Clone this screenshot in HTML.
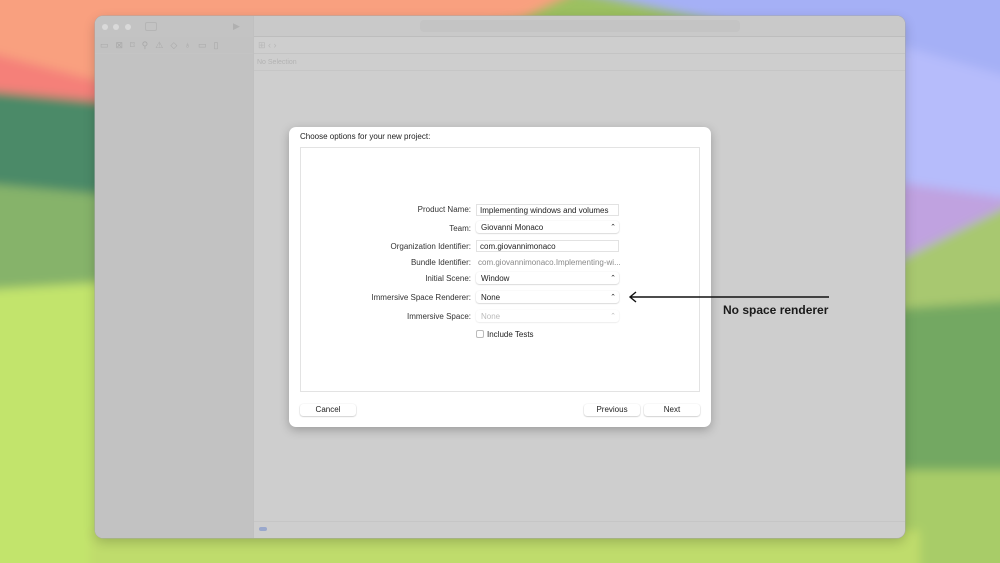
<!DOCTYPE html>
<html><head><meta charset="utf-8"><style>
*{margin:0;padding:0;box-sizing:border-box}
html,body{width:1000px;height:563px;overflow:hidden}
body{position:relative;font-family:"Liberation Sans",sans-serif;background:#9cc060}
.a{position:absolute}
.lbl{position:absolute;font-size:8px;color:#333;text-align:right;width:200px;left:271px}
.fld{position:absolute;left:476px;width:143px;height:12px;border:1px solid #e2e2e2;background:#fff;font-size:8px;color:#222;padding-left:3px;line-height:11px}
.pop{box-shadow:0 0.5px 1.5px rgba(0,0,0,.25);border:none;border-radius:3px;padding-left:5px;line-height:13px}
.pop:after{content:"⌃";position:absolute;right:3px;top:0;font-size:7px}
.btn{position:absolute;top:404px;height:12px;background:#fff;border-radius:3px;box-shadow:0 0.5px 1.5px rgba(0,0,0,.3);font-size:8px;text-align:center;line-height:12px;color:#222}
</style></head><body>
<svg class="a" style="left:0;top:0" width="1000" height="563">
<defs><filter id="b"><feGaussianBlur stdDeviation="5"/></filter></defs>
<rect width="1000" height="563" fill="#9cc060"/>
<g filter="url(#b)">
<polygon points="-20,-20 600,-20 520,20 95,80 -20,50" fill="#f9a07f"/>
<polygon points="-20,50 95,80 300,120 -20,92" fill="#f58079"/>
<polygon points="-20,90 300,120 300,215 -20,185" fill="#4b8a68"/>
<polygon points="-20,183 300,213 300,300 -20,300" fill="#86b36a"/>
<polygon points="-20,290 300,270 300,600 -20,600" fill="#c2e46c"/>
<polygon points="520,-20 1020,-20 1020,120 900,60" fill="#a5b0f6"/>
<polygon points="880,40 1020,80 1020,230 900,260" fill="#b6bcfb"/>
<polygon points="880,180 1020,200 1020,220 930,280 880,280" fill="#c0a2e0"/>
<polygon points="880,270 1020,200 1020,320 880,320" fill="#a8c870"/>
<polygon points="880,310 1020,300 1020,480 880,480" fill="#73a862"/>
<polygon points="880,470 1020,470 1020,600 880,600" fill="#a8cc68"/>
<polygon points="90,530 920,530 920,600 90,600" fill="#bfdc6c"/>
</g>
</svg>
<div class="a" style="left:95px;top:16px;width:810px;height:522px;background:#cecece;border-radius:8px;overflow:hidden;box-shadow:0 0 0 0.5px #aaa,0 4px 12px rgba(0,0,0,.2)">
 <div class="a" style="left:0;top:0;width:158px;height:522px;background:#c2c2c2"></div>
 <div class="a" style="left:0;top:0;width:810px;height:21px;background:#c9c9c9;border-bottom:1px solid #bdbdbd"></div>
 <div class="a" style="left:0;top:0;width:158px;height:21px;background:#c3c3c3"></div>
 <div class="a" style="left:7px;top:8px;width:6px;height:6px;border-radius:50%;background:#d9d9d9"></div>
 <div class="a" style="left:18px;top:8px;width:6px;height:6px;border-radius:50%;background:#d9d9d9"></div>
 <div class="a" style="left:30px;top:8px;width:6px;height:6px;border-radius:50%;background:#d9d9d9"></div>
 <div class="a" style="left:50px;top:6px;width:12px;height:9px;border:1px solid #b5b5b5;border-radius:2px"></div>
 <div class="a" style="left:138px;top:5px;font-size:9px;color:#b0b0b0">▶</div>
 <div class="a" style="left:325px;top:4px;width:320px;height:12px;background:#c4c4c4;border-radius:4px"></div>
 <div class="a" style="left:0;top:22px;width:810px;height:16px;border-bottom:1px solid #c4c4c4"></div>
 <div class="a" style="left:5px;top:24px;font-size:9px;color:#a8a8a8;letter-spacing:7px">▭⊠⌑⚲⚠◇♁▭▯</div>
 <div class="a" style="left:163px;top:24px;font-size:9px;color:#b8b8b8">⊞ ‹ ›</div>
 <div class="a" style="left:158px;top:39px;width:652px;height:16px;border-bottom:1px solid #c6c6c6"></div>
 <div class="a" style="left:162px;top:43px;font-size:7px;color:#b3b3b3">No Selection</div>
 <div class="a" style="left:158px;top:505px;width:652px;height:17px;border-top:1px solid #c6c6c6"></div>
 <div class="a" style="left:164px;top:511px;width:8px;height:4px;border-radius:2px;background:#9aa8cc"></div>
 <div class="a" style="left:158px;top:0;width:1px;height:522px;background:#c0c0c0"></div>
</div>
<div class="a" style="left:289px;top:127px;width:422px;height:300px;background:#fff;border-radius:7px;box-shadow:0 3px 10px rgba(0,0,0,.25)"></div>
<div class="a" style="left:300px;top:132px;font-size:8px;color:#222">Choose options for your new project:</div>
<div class="a" style="left:300px;top:147px;width:400px;height:245px;border:1px solid #e3e3e3"></div>
<div class="lbl" style="top:205px">Product Name:</div>
<div class="fld" style="top:204px">Implementing windows and volumes</div>
<div class="lbl" style="top:224px">Team:</div>
<div class="fld pop" style="top:221px">Giovanni Monaco</div>
<div class="lbl" style="top:242px">Organization Identifier:</div>
<div class="fld" style="top:240px">com.giovannimonaco</div>
<div class="lbl" style="top:258px">Bundle Identifier:</div>
<div class="a" style="left:478px;top:258px;font-size:8px;color:#8a8a8a">com.giovannimonaco.Implementing-wi...</div>
<div class="lbl" style="top:274px">Initial Scene:</div>
<div class="fld pop" style="top:272px">Window</div>
<div class="lbl" style="top:293px">Immersive Space Renderer:</div>
<div class="fld pop" style="top:291px">None</div>
<div class="lbl" style="top:312px">Immersive Space:</div>
<div class="fld pop" style="top:310px;color:#bbb;box-shadow:0 0.5px 1.5px rgba(0,0,0,.12)">None</div>
<div class="a" style="left:476px;top:330px;width:8px;height:8px;border:1px solid #bbb;border-radius:2px"></div>
<div class="a" style="left:487px;top:330px;font-size:8px;color:#222">Include Tests</div>
<div class="btn" style="left:300px;width:56px">Cancel</div>
<div class="btn" style="left:584px;width:56px">Previous</div>
<div class="btn" style="left:644px;width:56px">Next</div>
<svg class="a" style="left:625px;top:290px" width="210" height="14"><path d="M5 7H204M11 2L5 7L11 12" stroke="#111" stroke-width="1.4" fill="none"/></svg>
<div class="a" style="left:723px;top:303px;font-size:12px;font-weight:bold;color:#1a1a1a">No space renderer</div>
</body></html>
